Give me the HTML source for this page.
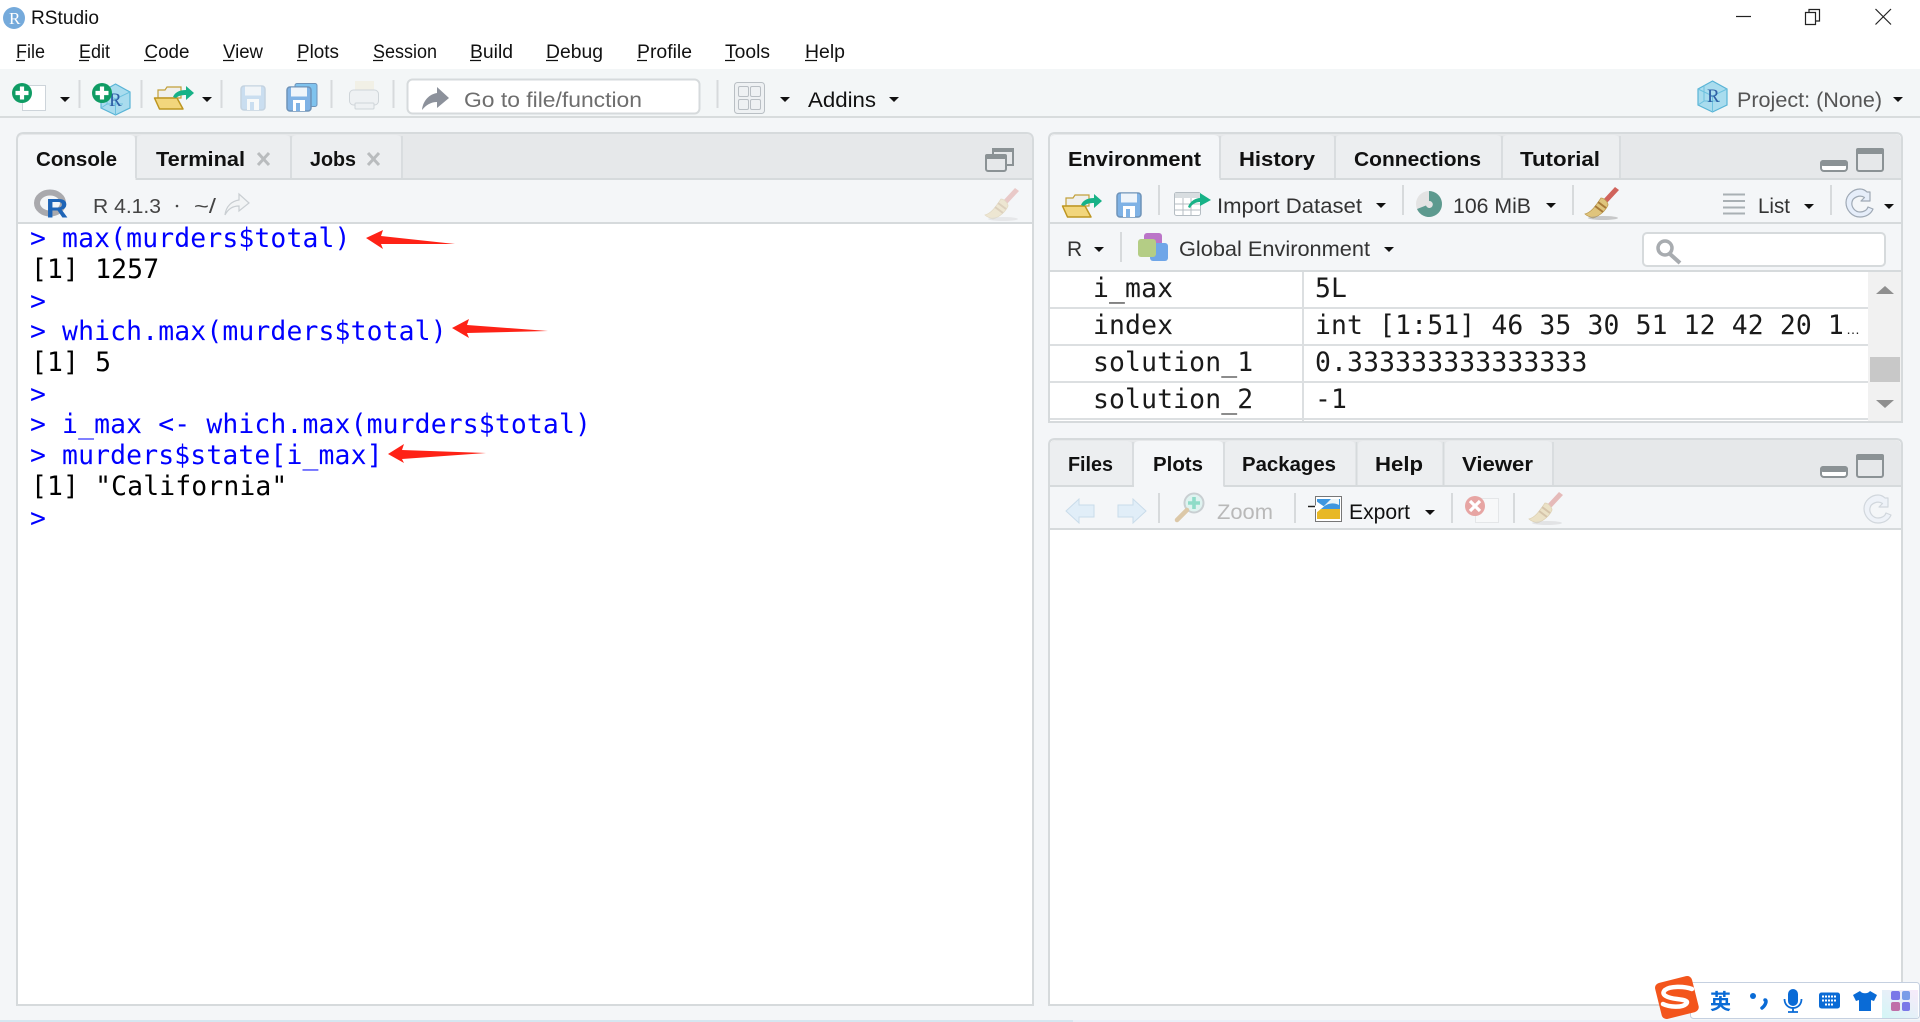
<!DOCTYPE html>
<html><head><meta charset="utf-8"><title>RStudio</title>
<style>
html,body{margin:0;padding:0;width:1920px;height:1022px;overflow:hidden;background:#f4f6f8}
svg{display:block;position:absolute;left:0;top:0}
text{font-family:"Liberation Sans","Noto Sans CJK SC",sans-serif;font-size:20px;fill:#333;white-space:pre}
.m{font-size:19.5px;fill:#111}
.t{font-size:20px;font-weight:bold;fill:#111}
.b{font-size:20.5px;fill:#333}
.c{font-family:"DejaVu Sans Mono",monospace;font-size:26.4px;fill:#000;letter-spacing:.14px}
.p{fill:#0000ff}
.i{font-family:"DejaVu Sans Mono",monospace;font-size:26.4px;fill:#1a1a1a;letter-spacing:.14px}
</style></head><body>
<svg width="1920" height="1022" viewBox="0 0 1920 1022" xmlns="http://www.w3.org/2000/svg">
<defs>
<symbol id="dd" viewBox="0 0 10 5" preserveAspectRatio="none"><path d="M0 0H10L5 5Z" fill="#111"/></symbol>
<g id="mm">
<rect x="1" y="13" width="26" height="10" rx="3" fill="#fff" stroke="#8b9295" stroke-width="2"/><rect x="0" y="12" width="28" height="6" rx="3" fill="#8b9295"/>
<rect x="37" y="1" width="26" height="22" rx="2" fill="none" stroke="#8b9295" stroke-width="2"/><rect x="36" y="0" width="28" height="6" rx="2" fill="#8b9295"/>
</g>
<g id="folder">
<path d="M4 13V5H11L13 2H27V13Z" fill="#efefec" stroke="#c2a03a" stroke-width="1.2"/>
<path d="M0.5 13H23L29 24H5.5Z" fill="#f2d67c" stroke="#bd9520" stroke-width="1.5" stroke-linejoin="round"/>
<path d="M19 12C21 7 26 5 32 5V1L40 8L32 15V10C27 10 24 11 22 13Z" fill="#17b287"/>
</g>
<g id="floppy">
<rect x="1" y="1" width="24" height="24" rx="3" fill="#7fb2e5" stroke="#6f93b8" stroke-width="1.5"/>
<rect x="5" y="1.5" width="16" height="9" fill="#eef4fa"/>
<rect x="7" y="14" width="12" height="11" fill="#fff"/><rect x="10" y="17" width="4" height="8" fill="#7fb2e5"/>
</g>
<g id="broom">
<path d="M30 2L34 5L21 19L17 16Z" fill="#d0635c"/>
<path d="M16 13C19 13 23 17 23 20C21 25 15 31 8 33C5 32 2 31 0 29C7 27 11 20 16 13Z" fill="#dfc47c" stroke="#bd9c52" stroke-width=".8"/>
<path d="M13 17L21 23M10 21L18 27" stroke="#a87a38" stroke-width="2"/>
<ellipse cx="18" cy="33" rx="15" ry="2" fill="#999" opacity=".5"/>
</g>
<g id="refresh">
<path d="M25 4V13H16L19.5 9.5C15 6.5 8 9 7 14C6 19 10 24 15 24C19 24 22 22 23 19L28 21C26 26 21 29 15 29C7 29 1 22 1 14.5C1 7 8 1 15 1C18 1 20 2 22 4Z" fill="#e6eefa" stroke="#9fa9b5" stroke-width="1.2" stroke-linejoin="round"/>
</g>
<g id="cube">
<path d="M14.5 0L29 8V24L14.5 31L0 24V8Z" fill="#a9dcee" stroke="#59b4d6" stroke-width="1.2"/>
<path d="M0 8L14.5 15L29 8M14.5 15V31M6 4V20L0 24M6 20L22 20" fill="none" stroke="#6dc1de" stroke-width="1"/>
</g>
</defs>

<!-- title -->
<rect width="1920" height="69" fill="#fff"/>
<circle cx="14" cy="18" r="11" fill="#75aadb"/>
<text x="9" y="24" style="font-family:'Liberation Serif',serif;font-size:17px;fill:#fff">R</text>
<text x="31" y="24" textLength="68" lengthAdjust="spacingAndGlyphs" style="font-size:19px;fill:#111">RStudio</text>
<path d="M1736 16.5H1751" stroke="#222" stroke-width="1.2"/>
<path d="M1805.5 12.5H1815.5V24.5H1805.5ZM1809 12V9.5H1819.5V21H1816" fill="none" stroke="#222" stroke-width="1.2"/>
<path d="M1875.5 9L1891 24.5M1891 9L1875.5 24.5" stroke="#222" stroke-width="1.2"/>
<text class="m" x="16" y="58" textLength="29" lengthAdjust="spacingAndGlyphs">File</text>
<text class="m" x="79" y="58" textLength="31" lengthAdjust="spacingAndGlyphs">Edit</text>
<text class="m" x="144.5" y="58" textLength="45" lengthAdjust="spacingAndGlyphs">Code</text>
<text class="m" x="223" y="58" textLength="40" lengthAdjust="spacingAndGlyphs">View</text>
<text class="m" x="297" y="58" textLength="42" lengthAdjust="spacingAndGlyphs">Plots</text>
<text class="m" x="373" y="58" textLength="64" lengthAdjust="spacingAndGlyphs">Session</text>
<text class="m" x="470" y="58" textLength="43" lengthAdjust="spacingAndGlyphs">Build</text>
<text class="m" x="546" y="58" textLength="57" lengthAdjust="spacingAndGlyphs">Debug</text>
<text class="m" x="637" y="58" textLength="55" lengthAdjust="spacingAndGlyphs">Profile</text>
<text class="m" x="725" y="58" textLength="45" lengthAdjust="spacingAndGlyphs">Tools</text>
<text class="m" x="805" y="58" textLength="40" lengthAdjust="spacingAndGlyphs">Help</text>
<path d="M16 60.5h9M79 60.5h10M144 60.5h12M223 60.5h11M297 60.5h10M373 60.5h10M470 60.5h11M546 60.5h12M637 60.5h10M725 60.5h10M805 60.5h12" stroke="#111" stroke-width="1.2"/>

<!-- main toolbar -->
<rect y="69" width="1920" height="47" fill="#f3f6f7"/>
<rect y="116" width="1920" height="2" fill="#d8dcdd"/>
<rect x="22.5" y="85.5" width="23" height="25" fill="#fff" stroke="#cdd4da"/>
<circle cx="22" cy="93" r="10" fill="#0f9c64"/><path d="M22 86.5V99.5M15.5 93H28.5" stroke="#fff" stroke-width="4.2"/>
<use href="#dd" x="60" y="97" width="10" height="5"/>
<g fill="#d7dadc"><rect x="78.5" y="80" width="2" height="28"/><rect x="140.5" y="80" width="2" height="28"/><rect x="220.5" y="80" width="2" height="28"/><rect x="330.5" y="80" width="2" height="28"/><rect x="392.5" y="80" width="2" height="28"/><rect x="716.5" y="80" width="2" height="28"/></g>
<use href="#cube" x="101" y="84"/>
<text x="109" y="106" style="font-family:'Liberation Serif',serif;font-size:19px;fill:#2f5fa5">R</text>
<circle cx="102" cy="93" r="10" fill="#0f9c64"/><path d="M102 86.5V99.5M95.5 93H108.5" stroke="#fff" stroke-width="4.2"/>
<use href="#folder" x="154" y="85"/>
<use href="#dd" x="202" y="97" width="10" height="5"/>
<g opacity=".35" transform="translate(240,85)"><use href="#floppy"/></g>
<rect x="295" y="83.5" width="22" height="23" rx="2" fill="#7fc3ee" stroke="#6f93b8"/>
<use href="#floppy" x="286" y="86"/>
<g>
<rect x="355" y="81" width="19" height="16" fill="#f1f0e6"/>
<rect x="349.5" y="90" width="29" height="15" rx="4" fill="#eef1f3" stroke="#cfd5d9"/>
<rect x="355" y="103" width="19" height="6" rx="1" fill="#eef1f3" stroke="#cfd5d9"/>
</g>
<rect x="407.5" y="79.5" width="292" height="34" rx="5" fill="#fff" stroke="#d6dadc" stroke-width="2"/>
<path d="M422 110C423 100 430 94 437 93V87L449 98L437 108V102C431 102 426 105 422 110Z" fill="#8c919b"/>
<text x="464" y="107" textLength="178" lengthAdjust="spacingAndGlyphs" style="font-size:21px;fill:#6e6e6e">Go to file/function</text>
<rect x="734.5" y="82.5" width="30" height="31" rx="3" fill="#eef1f3" stroke="#b9bfc4"/>
<g fill="none" stroke="#b9bfc4"><rect x="738.5" y="86.5" width="10" height="10" rx="1.5"/><rect x="750.5" y="86.5" width="10" height="10" rx="1.5"/><rect x="738.5" y="99.5" width="10" height="10" rx="1.5"/><rect x="750.5" y="99.5" width="10" height="10" rx="1.5"/></g>
<use href="#dd" x="780" y="97" width="10" height="5"/>
<text x="808" y="107" textLength="68" lengthAdjust="spacingAndGlyphs" style="font-size:21px;fill:#111">Addins</text>
<use href="#dd" x="889" y="97" width="10" height="5"/>
<use href="#cube" x="1698" y="81"/>
<text x="1707" y="102" style="font-family:'Liberation Serif',serif;font-size:19px;fill:#2f5fa5">R</text>
<text x="1737" y="107" textLength="145" lengthAdjust="spacingAndGlyphs" style="font-size:21px;fill:#555">Project: (None)</text>
<use href="#dd" x="1893" y="97" width="10" height="5"/>

<!-- left pane -->
<path d="M17 1005V140Q17 133 24 133H1026Q1033 133 1033 140V1005Z" fill="#fff" stroke="#d6dadc" stroke-width="2"/>
<path d="M18 180V140Q18 134 24 134H1026Q1032 134 1032 140V180Z" fill="#e6e8ea"/>
<path d="M18 180V140Q18 135 24 135H130Q135 135 135 140V180Z" fill="#f4f6f8"/>
<path d="M137 178V140Q137 135 142 135H285Q290 135 290 140V178Z" fill="#eceef0"/>
<path d="M292 178V140Q292 135 297 135H396Q401 135 401 140V178Z" fill="#eceef0"/>
<path d="M136 136V178M291 136V178M402 136V178" stroke="#d6dadc" stroke-width="1.6"/>
<rect x="136" y="178" width="896" height="2" fill="#d6dadc"/>
<rect x="18" y="180" width="1014" height="42" fill="#f4f6f8"/>
<rect x="18" y="222" width="1014" height="2" fill="#d6dadc"/>
<text class="t" x="36" y="166" textLength="81" lengthAdjust="spacingAndGlyphs">Console</text>
<text class="t" x="156" y="166" textLength="89" lengthAdjust="spacingAndGlyphs">Terminal</text>
<path d="M258 153L269 165M269 153L258 165" stroke="#b9bcbe" stroke-width="3"/>
<text class="t" x="310" y="166" textLength="46" lengthAdjust="spacingAndGlyphs">Jobs</text>
<path d="M368 153L379 165M379 153L368 165" stroke="#b9bcbe" stroke-width="3"/>
<g fill="none" stroke="#8b9295" stroke-width="2"><rect x="986" y="155" width="20" height="16" rx="2"/><path d="M993 155V149H1013V165H1006"/></g>
<rect x="985" y="154" width="22" height="5" rx="2" fill="#8b9295"/><rect x="992" y="148" width="22" height="4" rx="2" fill="#8b9295"/>
<ellipse cx="50" cy="203" rx="13" ry="10.5" fill="none" stroke="#a9a9ad" stroke-width="6"/>
<text x="46" y="217.5" textLength="22" lengthAdjust="spacingAndGlyphs" style="font-size:27px;font-weight:bold;fill:#1f65b7">R</text>
<text class="b" x="93" y="213" textLength="68" lengthAdjust="spacingAndGlyphs" style="fill:#444">R 4.1.3</text>
<circle cx="177" cy="206" r="1.3" fill="#444"/>
<text class="b" x="194" y="213" textLength="22" lengthAdjust="spacingAndGlyphs" style="fill:#444">~/</text>
<path d="M225 215C226 206 232 201 239 200V194L249 203L239 211V206C233 206 228 209 225 215Z" fill="#f2f4f5" stroke="#c9ced2" stroke-width="1.2"/>
<g opacity=".3" transform="translate(985,186)"><use href="#broom"/></g>

<!-- console -->
<text class="c p" x="30" y="247">&gt; max(murders$total)</text>
<text class="c" x="31" y="278">[1] 1257</text>
<text class="c p" x="30" y="310">&gt;</text>
<text class="c p" x="30" y="340">&gt; which.max(murders$total)</text>
<text class="c" x="31" y="371">[1] 5</text>
<text class="c p" x="30" y="403">&gt;</text>
<text class="c p" x="30" y="433">&gt; i_max &lt;- which.max(murders$total)</text>
<text class="c p" x="30" y="464">&gt; murders$state[i_max]</text>
<text class="c" x="31" y="495">[1] "California"</text>
<text class="c p" x="30" y="527">&gt;</text>
<g fill="#fe2216">
<path d="M366 238L383 230L381 236L455 244L381 244L383 249Z"/>
<path d="M452 328L469 319L467 325L548 331L467 333L469 338Z"/>
<path d="M388 454L404 444L402 450L486 453L402 459L404 463Z"/>
</g>

<!-- upper right pane -->
<path d="M1049 422V139Q1049 133 1055 133H1896Q1902 133 1902 139V422Z" fill="#fff" stroke="#d6dadc" stroke-width="2"/>
<path d="M1050 180V140Q1050 134 1056 134H1895Q1901 134 1901 140V180Z" fill="#e6e8ea"/>
<path d="M1050 180V140Q1050 135 1056 135H1214Q1219 135 1219 140V180Z" fill="#f4f6f8"/>
<path d="M1221 178V140Q1221 135 1226 135H1329Q1334 135 1334 140V178Z" fill="#eceef0"/>
<path d="M1336 178V140Q1336 135 1341 135H1496Q1501 135 1501 140V178Z" fill="#eceef0"/>
<path d="M1503 178V140Q1503 135 1508 135H1614Q1619 135 1619 140V178Z" fill="#eceef0"/>
<path d="M1220 136V178M1335 136V178M1502 136V178M1620 136V178" stroke="#d6dadc" stroke-width="1.6"/>
<rect x="1220" y="178" width="682" height="2" fill="#d6dadc"/>
<rect x="1050" y="180" width="851" height="90" fill="#f4f6f8"/>
<rect x="1050" y="222" width="851" height="2" fill="#d6dadc"/>
<rect x="1050" y="270" width="851" height="2" fill="#d6dadc"/>
<text class="t" x="1068" y="166" textLength="133" lengthAdjust="spacingAndGlyphs">Environment</text>
<text class="t" x="1239" y="166" textLength="76" lengthAdjust="spacingAndGlyphs">History</text>
<text class="t" x="1354" y="166" textLength="127" lengthAdjust="spacingAndGlyphs">Connections</text>
<text class="t" x="1520" y="166" textLength="80" lengthAdjust="spacingAndGlyphs">Tutorial</text>
<use href="#mm" x="1820" y="148"/>
<use href="#folder" x="1062" y="193"/>
<use href="#floppy" x="1116" y="192"/>
<g fill="#d7dadc"><rect x="1158" y="185" width="2" height="30"/><rect x="1402" y="185" width="2" height="30"/><rect x="1572" y="185" width="2" height="30"/><rect x="1830" y="185" width="2" height="30"/><rect x="1120" y="232" width="2" height="30"/></g>
<rect x="1174.5" y="192.5" width="26" height="23" rx="2" fill="#fff" stroke="#b5bdc3"/>
<rect x="1175" y="193" width="25" height="5" fill="#d8dde0"/>
<path d="M1183 198V215M1191 198V215M1175 204H1200M1175 210H1200" stroke="#b5bdc3"/>
<path d="M1188 207C1190 201 1196 198 1200 198V193L1211 200L1200 206V202C1196 202 1192 204 1190 208Z" fill="#17b287"/>
<text class="b" x="1217" y="213" textLength="145" lengthAdjust="spacingAndGlyphs" style="font-size:21px">Import Dataset</text>
<use href="#dd" x="1376" y="203" width="10" height="5"/>
<circle cx="1429" cy="204" r="13" fill="#e3e3e3"/>
<path d="M1429 191A13 13 0 1 1 1417 209L1426 205.5A3.5 3.5 0 1 0 1429 201Z" fill="#5d9a8f"/>
<text class="b" x="1453" y="213" textLength="78" lengthAdjust="spacingAndGlyphs" style="font-size:21px">106 MiB</text>
<use href="#dd" x="1546" y="203" width="10" height="5"/>
<use href="#broom" x="1585" y="185"/>
<path d="M1723 194.5H1745M1723 201H1745M1723 207.5H1745M1723 213.5H1745" stroke="#a9b0b4" stroke-width="2"/>
<text class="b" x="1758" y="213" textLength="32" lengthAdjust="spacingAndGlyphs" style="font-size:21px">List</text>
<use href="#dd" x="1804" y="204" width="10" height="5"/>
<use href="#refresh" x="1845" y="188"/>
<use href="#dd" x="1884" y="204" width="10" height="5"/>
<text class="b" x="1067" y="256" style="font-size:21px">R</text>
<use href="#dd" x="1094" y="247" width="10" height="5"/>
<rect x="1144" y="233" width="18" height="20" rx="3" fill="#bb75c8"/>
<rect x="1150" y="243" width="18" height="18" rx="3" fill="#6fa6e8"/>
<rect x="1138" y="239" width="18" height="18" rx="3" fill="#b4cd85"/>
<text class="b" x="1179" y="256" textLength="191" lengthAdjust="spacingAndGlyphs" style="font-size:21px">Global Environment</text>
<use href="#dd" x="1384" y="247" width="10" height="5"/>
<rect x="1643" y="233" width="242" height="33" rx="4" fill="#fff" stroke="#d6dadc" stroke-width="2"/>
<circle cx="1665" cy="248" r="7" fill="none" stroke="#a8acb0" stroke-width="3.5"/>
<path d="M1670 254L1680 263" stroke="#a8acb0" stroke-width="4"/>
<!-- table -->
<rect x="1050" y="307" width="818" height="2" fill="#dcdfe1"/>
<rect x="1050" y="344" width="818" height="2" fill="#dcdfe1"/>
<rect x="1050" y="381" width="818" height="2" fill="#dcdfe1"/>
<rect x="1050" y="418" width="818" height="2" fill="#dcdfe1"/>
<rect x="1302" y="272" width="2" height="149" fill="#dcdfe1"/>
<text class="i" x="1093" y="297">i_max</text><text class="i" x="1315" y="297">5L</text>
<text class="i" x="1093" y="334">index</text><text class="i" x="1315" y="334">int [1:51] 46 35 30 51 12 42 20 1</text>
<text x="1846" y="334" style="font-size:14px;fill:#222">…</text>
<text class="i" x="1093" y="371">solution_1</text><text class="i" x="1315" y="371">0.333333333333333</text>
<text class="i" x="1093" y="408">solution_2</text><text class="i" x="1315" y="408">-1</text>
<rect x="1868" y="272" width="33" height="149" fill="#f1f1f1"/>
<path d="M1876 294L1885 286L1894 294Z" fill="#8f8f8f"/>
<path d="M1876 400L1885 408L1894 400Z" fill="#8f8f8f"/>
<rect x="1870" y="357" width="30" height="25" fill="#c8c8c8"/>

<!-- lower right pane -->
<path d="M1049 1005V445Q1049 439 1055 439H1896Q1902 439 1902 445V1005Z" fill="#fff" stroke="#d6dadc" stroke-width="2"/>
<path d="M1050 487V446Q1050 440 1056 440H1895Q1901 440 1901 446V487Z" fill="#e6e8ea"/>
<path d="M1050 485V446Q1050 441 1056 441H1127Q1132 441 1132 446V485Z" fill="#eceef0"/>
<path d="M1134 487V446Q1134 441 1139 441H1218Q1223 441 1223 446V487Z" fill="#f4f6f8"/>
<path d="M1225 485V446Q1225 441 1230 441H1350Q1355 441 1355 446V485Z" fill="#eceef0"/>
<path d="M1358 485V446Q1358 441 1363 441H1437Q1442 441 1442 446V485Z" fill="#eceef0"/>
<path d="M1445 485V446Q1445 441 1450 441H1547Q1552 441 1552 446V485Z" fill="#eceef0"/>
<path d="M1133 442V486M1224 442V486M1356.5 442V485M1443.5 442V485M1553 442V485" stroke="#d6dadc" stroke-width="1.6"/>
<rect x="1050" y="485" width="84" height="2" fill="#d6dadc"/><rect x="1224" y="485" width="678" height="2" fill="#d6dadc"/>
<rect x="1050" y="487" width="851" height="41" fill="#f4f6f8"/>
<rect x="1050" y="528" width="851" height="2" fill="#d6dadc"/>
<text class="t" x="1068" y="471" textLength="45" lengthAdjust="spacingAndGlyphs">Files</text>
<text class="t" x="1153" y="471" textLength="50" lengthAdjust="spacingAndGlyphs">Plots</text>
<text class="t" x="1242" y="471" textLength="94" lengthAdjust="spacingAndGlyphs">Packages</text>
<text class="t" x="1375" y="471" textLength="48" lengthAdjust="spacingAndGlyphs">Help</text>
<text class="t" x="1462" y="471" textLength="71" lengthAdjust="spacingAndGlyphs">Viewer</text>
<use href="#mm" x="1820" y="454"/>
<path d="M1066 511L1079 499V505H1094V517H1079V523Z" fill="#e1eef8" stroke="#c9dcea"/>
<path d="M1146 511L1133 499V505H1118V517H1133V523Z" fill="#e1eef8" stroke="#c9dcea"/>
<g fill="#d7dadc"><rect x="1158" y="493" width="2" height="30"/><rect x="1294" y="493" width="2" height="30"/><rect x="1451" y="493" width="2" height="30"/><rect x="1513" y="493" width="2" height="30"/></g>
<circle cx="1194" cy="503" r="9.5" fill="#dff3f0" stroke="#c9cfd2" stroke-width="2"/>
<path d="M1194 497V509M1188 503H1200" stroke="#8fdcc8" stroke-width="3.6"/>
<path d="M1187 510L1177 520" stroke="#dcc8a8" stroke-width="4.5" stroke-linecap="round"/>
<text x="1217" y="519" textLength="56" lengthAdjust="spacingAndGlyphs" style="font-size:21px;fill:#b9b9b9">Zoom</text>
<rect x="1315.5" y="496.5" width="26" height="25" fill="#fff" stroke="#777"/>
<rect x="1317" y="499" width="23" height="10" fill="#3e97df"/><rect x="1317" y="509" width="23" height="10" fill="#e8b825"/>
<path d="M1321 509C1327 503 1333 502 1339 505L1339 499L1331 499Z" fill="#eaf4f7"/>
<path d="M1308 505.5H1316V501L1324 506.5L1316 513V509H1308Z" fill="#fff"/>
<path d="M1308 506.5H1315" stroke="#222" stroke-width="1.5"/>
<text x="1349" y="519" textLength="61" lengthAdjust="spacingAndGlyphs" style="font-size:21px;fill:#111">Export</text>
<use href="#dd" x="1425" y="510" width="10" height="5"/>
<rect x="1475.5" y="498.5" width="23" height="24" fill="#f7f8f9" stroke="#e4e6e8"/>
<circle cx="1475" cy="506" r="10" fill="#e7a5a3"/>
<path d="M1470 501L1480 511M1480 501L1470 511" stroke="#fff" stroke-width="3.2"/>
<g opacity=".4" transform="translate(1529,490)"><use href="#broom"/></g>
<g opacity=".4" transform="translate(1863,494)"><use href="#refresh"/></g>

<!-- bottom strip -->
<rect x="0" y="1020" width="1073" height="2" fill="#d5e6f0"/>
<rect x="1073" y="1020" width="847" height="2" fill="#e9f0f8"/>

<!-- Sogou IME -->
<rect x="1690.5" y="982.5" width="229" height="36" rx="3" fill="#fff" stroke="#c5d0e0"/>
<defs><linearGradient id="ir" x1="0" y1="1" x2="1" y2="0"><stop offset="0" stop-color="#d3f6f6"/><stop offset="1" stop-color="#f8eafa"/></linearGradient></defs>
<rect x="1882" y="990" width="36" height="28" fill="url(#ir)"/>
<rect x="1658" y="979" width="38" height="37" rx="5" fill="#f3551c" transform="rotate(-14 1677 998)"/>
<path d="M1692 989C1684 986 1670 986 1665 990C1660 995 1668 998 1677 999C1685 1000 1689 1001 1686 1004C1682 1008 1669 1007 1663 1004" fill="none" stroke="#fff" stroke-width="4.5" stroke-linecap="round"/>
<text x="1710" y="1009" style="font-family:'Noto Sans CJK SC',sans-serif;font-size:21px;font-weight:bold;fill:#0a6bd6">英</text>
<circle cx="1753" cy="996" r="3" fill="#0a6bd6"/>
<path d="M1765 1000C1767 1000 1766 1005 1762 1008" fill="none" stroke="#0a6bd6" stroke-width="3.5" stroke-linecap="round"/>
<rect x="1788" y="989" width="10" height="17" rx="5" fill="#0a6bd6"/>
<path d="M1784.5 999C1784.5 1011 1801.5 1011 1801.5 999M1793 1007V1012M1788 1012H1798" fill="none" stroke="#0a6bd6" stroke-width="1.8"/>
<rect x="1819" y="992.5" width="21" height="16" rx="2.5" fill="#0a6bd6"/>
<path d="M1822 996.5h15M1822 1000.5h15M1825 1004.5h9" stroke="#fff" stroke-width="2" stroke-dasharray="2 1"/>
<path d="M1860 991L1853 995L1856 1001L1859 1000V1011H1871V1000L1874 1001L1877 995L1870 991C1868 994 1862 994 1860 991Z" fill="#0a6bd6"/>
<g><rect x="1891" y="991" width="9" height="9" rx="2" fill="#7a78e8"/><rect x="1902" y="991" width="8" height="9" rx="2" fill="#6e92e6" opacity=".9"/><rect x="1891" y="1002" width="9" height="9" rx="2" fill="#c06fa8"/><rect x="1902" y="1002" width="8" height="9" rx="2" fill="#7a78e8"/></g>
</svg>
</body></html>
